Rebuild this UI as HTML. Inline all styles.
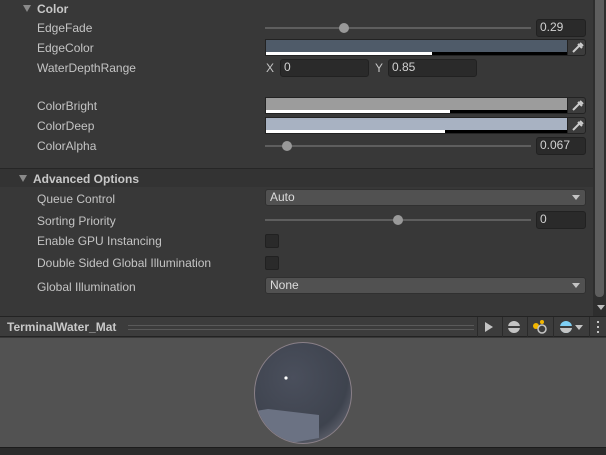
<!DOCTYPE html>
<html><head><style>
*{margin:0;padding:0;box-sizing:border-box}
body{width:606px;height:455px;background:#383838;font-family:"Liberation Sans",sans-serif;font-size:12px;color:#c4c4c4;position:relative;overflow:hidden}
.a{position:absolute}
.l{position:absolute;left:37px;line-height:14px}
.tr{position:absolute;height:2px;background:#5e5e5e}
.kn{position:absolute;width:10px;height:10px;border-radius:50%;background:#999}
.fld{position:absolute;background:#2a2a2a;border:1px solid #212121;border-radius:3px;padding-left:3px;line-height:15px;color:#d2d2d2}
.sw{position:absolute;left:265px;width:303px;height:17px;border:1px solid #232323}
.sw .w{position:absolute;left:0;bottom:0;height:3px;background:#fff}
.sw .b{position:absolute;right:0;bottom:0;height:3px;background:#000}
.ey{position:absolute;left:567px;width:19px;height:17px;background:#3c3c3c;border:1px solid #232323;border-radius:0 3px 3px 0}
.dd{position:absolute;left:265px;width:321px;height:17px;background:#515151;border:1px solid #303030;border-radius:3px;padding-left:4px;line-height:15px;color:#dcdcdc}
.dd:after{content:"";position:absolute;right:5px;top:5px;border-left:4px solid transparent;border-right:4px solid transparent;border-top:5px solid #c4c4c4}
.cb{position:absolute;left:265px;width:14px;height:14px;background:#2a2a2a;border:1px solid #212121;border-radius:2px}
.tri{position:absolute;border-left:4px solid transparent;border-right:4px solid transparent;border-top:7px solid #8a8a8a}
</style></head><body>
<div class="tri" style="left:23px;top:5px"></div>
<div class="a" style="left:37px;top:2px;font-weight:bold;color:#c8c8c8">Color</div>
<div class="l" style="top:21px">EdgeFade</div>
<div class="tr" style="left:265px;top:27px;width:266px"></div>
<div class="kn" style="left:339px;top:23px"></div>
<div class="fld" style="left:536px;top:19px;width:50px;height:18px">0.29</div>
<div class="l" style="top:41px">EdgeColor</div>
<div class="sw" style="top:39px;background:#4f5b69"><div class="w" style="width:166px"></div><div class="b" style="width:135px"></div></div>
<div class="ey" style="top:39px"><svg width="17" height="15" class="a" style="left:1px;top:0"><path d="M4 12 L10 6 M9 4 L13 8 M11 3 L14 6" stroke="#ccc" stroke-width="2"/></svg></div>
<div class="l" style="top:61px">WaterDepthRange</div>
<div class="a" style="left:266px;top:61px">X</div>
<div class="fld" style="left:280px;top:59px;width:89px;height:18px">0</div>
<div class="a" style="left:375px;top:61px">Y</div>
<div class="fld" style="left:388px;top:59px;width:89px;height:18px">0.85</div>
<div class="l" style="top:99px">ColorBright</div>
<div class="sw" style="top:97px;background:#9c9c9c"><div class="w" style="width:184px"></div><div class="b" style="width:117px"></div></div>
<div class="ey" style="top:97px"><svg width="17" height="15" class="a" style="left:1px;top:0"><path d="M4 12 L10 6 M9 4 L13 8 M11 3 L14 6" stroke="#ccc" stroke-width="2"/></svg></div>
<div class="l" style="top:119px">ColorDeep</div>
<div class="sw" style="top:117px;background:#a8b2c2"><div class="w" style="width:179px"></div><div class="b" style="width:122px"></div></div>
<div class="ey" style="top:117px"><svg width="17" height="15" class="a" style="left:1px;top:0"><path d="M4 12 L10 6 M9 4 L13 8 M11 3 L14 6" stroke="#ccc" stroke-width="2"/></svg></div>
<div class="l" style="top:139px">ColorAlpha</div>
<div class="tr" style="left:265px;top:145px;width:266px"></div>
<div class="kn" style="left:282px;top:141px"></div>
<div class="fld" style="left:536px;top:137px;width:50px;height:18px">0.067</div>
<div class="a" style="left:0;top:168px;width:593px;height:1px;background:#262626"></div>
<div class="a" style="left:0;top:169px;width:593px;height:18px;background:#333"></div>
<div class="tri" style="left:19px;top:175px"></div>
<div class="a" style="left:33px;top:172px;font-weight:bold;color:#c8c8c8">Advanced Options</div>
<div class="l" style="left:37px;top:192px">Queue Control</div>
<div class="dd" style="top:189px">Auto</div>
<div class="l" style="left:37px;top:214px">Sorting Priority</div>
<div class="tr" style="left:265px;top:219px;width:266px"></div>
<div class="kn" style="left:393px;top:215px"></div>
<div class="fld" style="left:536px;top:211px;width:50px;height:18px">0</div>
<div class="l" style="left:37px;top:234px">Enable GPU Instancing</div>
<div class="cb" style="top:234px"></div>
<div class="l" style="left:37px;top:256px">Double Sided Global Illumination</div>
<div class="cb" style="top:256px"></div>
<div class="l" style="left:37px;top:280px">Global Illumination</div>
<div class="dd" style="top:277px">None</div>
<div class="a" style="left:593px;top:0;width:13px;height:316px;background:#2e2e2e"></div>
<div class="a" style="left:595px;top:0;width:9px;height:297px;background:#5e5e5e;border-radius:0 0 4px 4px"></div>
<div class="a" style="left:597px;top:305px;border-left:4px solid transparent;border-right:4px solid transparent;border-top:5px solid #bbb"></div>
<div class="a" style="left:0;top:316px;width:606px;height:1px;background:#232323"></div>
<div class="a" style="left:0;top:317px;width:606px;height:20px;background:#3c3c3c;border-bottom:1px solid #232323"></div>
<div class="a" style="left:7px;top:320px;font-weight:bold;color:#c8c8c8">TerminalWater_Mat</div>
<div class="a" style="left:128px;top:325px;width:346px;height:1px;background:#5a5a5a"></div>
<div class="a" style="left:128px;top:329px;width:346px;height:1px;background:#5a5a5a"></div>
<div class="a" style="left:477px;top:317px;width:1px;height:20px;background:#2a2a2a"></div>
<div class="a" style="left:502px;top:317px;width:1px;height:20px;background:#2a2a2a"></div>
<div class="a" style="left:527px;top:317px;width:1px;height:20px;background:#2a2a2a"></div>
<div class="a" style="left:553px;top:317px;width:1px;height:20px;background:#2a2a2a"></div>
<div class="a" style="left:589px;top:317px;width:1px;height:20px;background:#2a2a2a"></div>
<svg class="a" style="left:478px;top:317px" width="128" height="20">
<path d="M7 5 L15 10 L7 15Z" fill="#c4c4c4"/>
<circle cx="36" cy="10" r="6" fill="#c4c4c4"/><rect x="29" y="9" width="14" height="2" fill="#3c3c3c"/>
<circle cx="58" cy="9" r="3" fill="#f2b600"/><circle cx="64" cy="5" r="2" fill="#f2b600"/>
<circle cx="64" cy="12" r="4" fill="none" stroke="#c4c4c4" stroke-width="1.5"/>
<circle cx="88" cy="10" r="6" fill="#7fd0f5"/><path d="M82 10 A6 6 0 0 0 94 10Z" fill="#c4c4c4"/><rect x="81" y="9" width="14" height="2" fill="#3c3c3c"/>
<path d="M97 8 L105 8 L101 13Z" fill="#c4c4c4"/>
<rect x="119" y="4" width="2" height="2" fill="#c4c4c4"/><rect x="119" y="9" width="2" height="2" fill="#c4c4c4"/><rect x="119" y="14" width="2" height="2" fill="#c4c4c4"/>
</svg>
<div class="a" style="left:0;top:338px;width:606px;height:109px;background:#525252"></div>
<svg class="a" style="left:250px;top:340px" width="110" height="108">
<defs><radialGradient id="g" cx="0.4" cy="0.35" r="0.7"><stop offset="0" stop-color="#4a4f5c"/><stop offset="0.8" stop-color="#3e434e"/><stop offset="1" stop-color="#5b5e69"/></radialGradient>
<clipPath id="c"><ellipse cx="53" cy="53" rx="48" ry="50"/></clipPath></defs>
<ellipse cx="53" cy="53" rx="48.5" ry="50.5" fill="url(#g)" stroke="#8a8088" stroke-width="1"/>
<path d="M0 72 L18 69 L69 75 L69 98 L30 105 L0 100Z" fill="#6b7283" clip-path="url(#c)"/>
<circle cx="36" cy="38" r="1.6" fill="#fff"/>
</svg>
<div class="a" style="left:0;top:447px;width:606px;height:8px;background:#2b2b2b;border-top:1px solid #1c1c1c"></div>
</body></html>
